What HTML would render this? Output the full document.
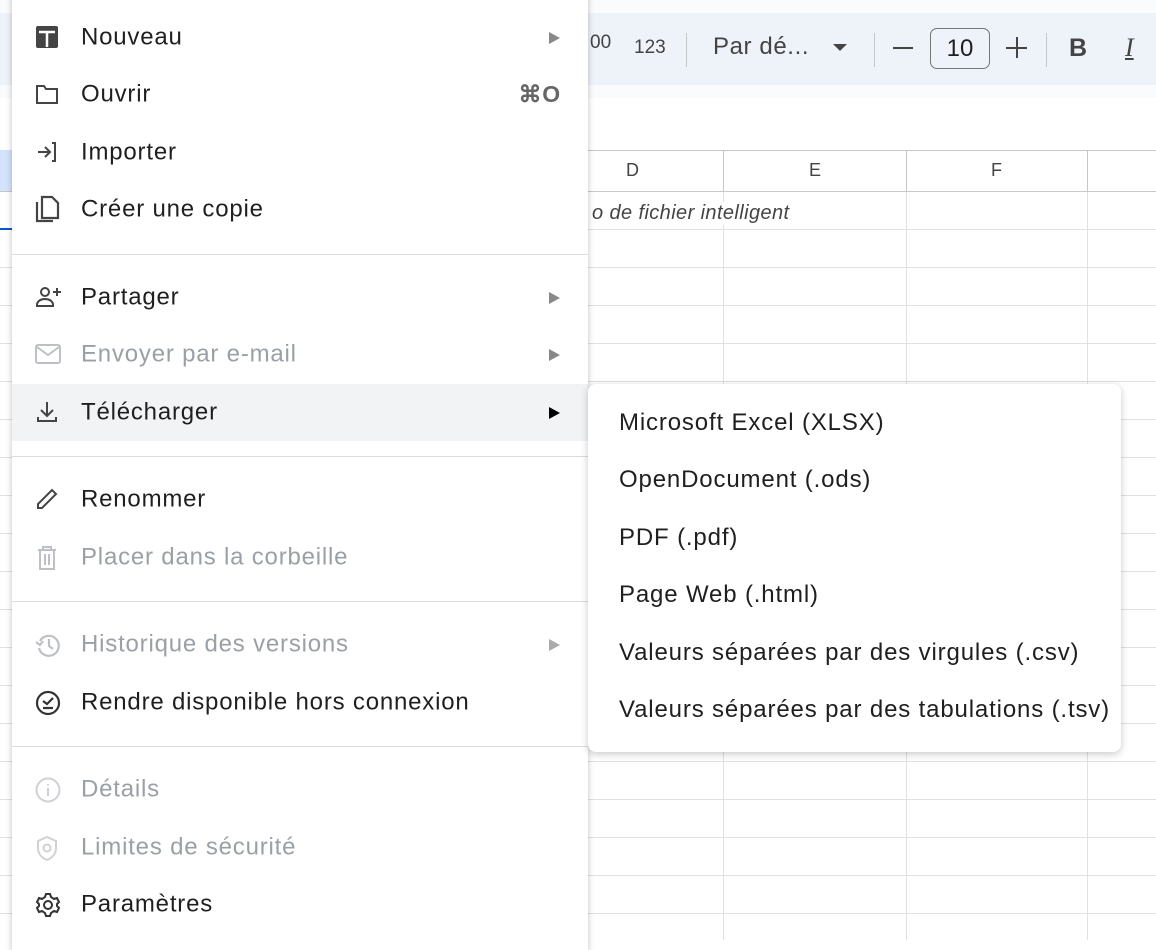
<!DOCTYPE html>
<html><head><meta charset="utf-8"><style>
*{margin:0;padding:0;box-sizing:border-box}
body{width:1156px;height:940px;overflow:hidden;position:relative;background:#fff;font-family:"Liberation Sans",Arial,sans-serif;}
.top{position:absolute;left:0;top:0;width:1156px;height:98px;background:#f9fbfd}
.tb{position:absolute;left:0;top:13px;width:1156px;height:72px;background:#eef2f9}
.grid{position:absolute;left:0;top:191px;width:1156px;height:749px;
background-image:repeating-linear-gradient(to bottom,#e1e1e1 0,#e1e1e1 1px,transparent 1px,transparent 38px);background-position:0 0}
.vl{position:absolute;width:1px;background:#e1e1e1;top:150px;height:790px}
.hdr{position:absolute;left:0;top:150px;width:1156px;height:42px;background:#fff;border-top:1px solid #c7c7c7;border-bottom:1px solid #c7c7c7}
.hl{position:absolute;top:150px;height:41px;width:1px;background:#c7c7c7}
.col{position:absolute;top:160px;font-size:18px;color:#444}
.menu{position:absolute;left:12px;top:-10px;width:576px;height:960px;background:#fff;box-shadow:0 2px 6px rgba(0,0,0,.25)}
.it{position:absolute;left:12px;width:576px;height:57px;font-size:24px;letter-spacing:0.8px;color:#1f1f1f}
.it span.t{position:absolute;left:69px;top:50%;transform:translateY(-52%);white-space:nowrap}
.it.dis{color:#9aa0a6}
.it svg{position:absolute;left:23px;top:16px}
.arr{position:absolute;right:28px;top:50%;transform:translateY(-50%);width:0;height:0;border-left:11px solid #888;border-top:6px solid transparent;border-bottom:6px solid transparent}
.sep{position:absolute;left:12px;width:576px;height:1px;background:#dadce0}
.sub{position:absolute;left:588px;top:384px;width:533px;height:368px;background:#fff;border-radius:8px;box-shadow:0 2px 8px rgba(0,0,0,.22)}
.si{position:absolute;left:31px;font-size:24px;letter-spacing:0.85px;color:#1f1f1f;white-space:nowrap}
</style></head><body>
<div class="top"></div>
<div class="tb"></div>
<div style="position:absolute;left:634px;top:37px;font-size:19px;color:#444">123</div>
<div style="position:absolute;left:686px;top:33px;width:1px;height:34px;background:#c7c7c7"></div>
<div style="position:absolute;left:713px;top:33px;font-size:24px;letter-spacing:0.6px;color:#444">Par dé...</div>
<div style="position:absolute;left:833px;top:44px;border-top:7px solid #444;border-left:7px solid transparent;border-right:7px solid transparent"></div>
<div style="position:absolute;left:874px;top:33px;width:1px;height:34px;background:#c7c7c7"></div>
<div style="position:absolute;left:893px;top:47px;width:20px;height:2px;background:#444"></div>
<div style="position:absolute;left:930px;top:28px;width:60px;height:41px;border:1px solid #747775;border-radius:7px;font-size:24px;color:#1f1f1f;text-align:center;line-height:39px">10</div>
<div style="position:absolute;left:1006px;top:47px;width:21px;height:2px;background:#444"></div>
<div style="position:absolute;left:1016px;top:37px;width:2px;height:21px;background:#444"></div>
<div style="position:absolute;left:1046px;top:33px;width:1px;height:34px;background:#c7c7c7"></div>
<div style="position:absolute;left:1069px;top:34px;font-size:25px;font-weight:bold;color:#444">B</div>
<div style="position:absolute;left:1125px;top:33px;font-size:26px;font-style:italic;font-family:'Liberation Serif',serif;color:#444;text-decoration:underline">I</div>
<div style="position:absolute;left:590px;top:32px;font-size:19px;color:#444">00</div>
<div class="grid"></div>
<div class="vl" style="left:723px"></div><div class="vl" style="left:906px"></div><div class="vl" style="left:1087px"></div>
<div class="hdr"></div>
<div style="position:absolute;left:0;top:150px;width:12px;height:41px;background:#d3e3fd"></div>
<div style="position:absolute;left:0;top:228px;width:12px;height:2px;background:#0b57d0"></div>
<div class="hl" style="left:723px"></div><div class="hl" style="left:906px"></div><div class="hl" style="left:1087px"></div>
<div class="col" style="left:626px">D</div><div class="col" style="left:809px">E</div><div class="col" style="left:991px">F</div>
<div style="position:absolute;left:592px;top:202px;font-size:20px;letter-spacing:0.4px;font-style:italic;color:#444;background:#fff">o de fichier intelligent</div>

<div class="menu"></div>
<div class="it" style="top:9px"><svg width="24" height="24" viewBox="0 0 24 24"><rect x="1" y="1" width="22" height="22" rx="2" fill="#444"/><path d="M4 7h16M12 7v15" stroke="#fff" stroke-width="2.5"/></svg><span class="t">Nouveau</span><div class="arr"></div></div>
<div class="it" style="top:66px"><svg width="24" height="24" viewBox="0 0 24 24" fill="none" stroke="#444" stroke-width="2"><path d="M2 4h7l2 3h11v14H2z"/></svg><span class="t">Ouvrir</span><span style="position:absolute;right:27px;top:50%;transform:translateY(-52%);color:#666;font-size:23px;font-weight:bold">⌘O</span></div>
<div class="it" style="top:124px"><svg width="24" height="24" viewBox="0 0 24 24" fill="none" stroke="#444" stroke-width="2"><path d="M3 12h11M10 7l5 5-5 5M17 3h3v18h-3"/></svg><span class="t">Importer</span></div>
<div class="it" style="top:181px"><svg width="26" height="28" viewBox="0 0 26 28" fill="none" stroke="#444" stroke-width="2.2" style="top:14px"><path d="M2 7v19h16M7 2h10l6 6v15H7z"/></svg><span class="t">Créer une copie</span></div>
<div class="sep" style="top:254px"></div>
<div class="it" style="top:269px"><svg width="28" height="24" viewBox="0 0 28 24" fill="none" stroke="#444" stroke-width="2"><circle cx="10" cy="7" r="4"/><path d="M2 20c0-4 4-6 8-6s8 2 8 6v1H2z"/><path d="M22 3v8M18 7h8"/></svg><span class="t">Partager</span><div class="arr"></div></div>
<div class="it dis" style="top:326px"><svg width="26" height="24" viewBox="0 0 26 24" fill="none" stroke="#bdc1c6" stroke-width="2"><rect x="1" y="3" width="24" height="18" rx="2"/><path d="M2 5l11 8 11-8"/></svg><span class="t">Envoyer par e-mail</span><div class="arr"></div></div>
<div class="it" style="top:384px;background:#f1f3f4;height:57px"><svg width="24" height="24" viewBox="0 0 24 24" fill="none" stroke="#444" stroke-width="2"><path d="M12 2v13M6 10l6 6 6-6M3 17v4h18v-4"/></svg><span class="t">Télécharger</span><div class="arr" style="border-left-color:#000"></div></div>
<div class="sep" style="top:456px"></div>
<div class="it" style="top:471px"><svg width="24" height="24" viewBox="0 0 24 24" fill="none" stroke="#444" stroke-width="2"><path d="M3 21v-4L17 3l4 4L7 21z"/></svg><span class="t">Renommer</span></div>
<div class="it dis" style="top:529px"><svg width="24" height="26" viewBox="0 0 24 26" fill="none" stroke="#bdc1c6" stroke-width="2"><path d="M3 5h18M8 5V2h8v3M5 5v19h14V5M10 9v11M14 9v11"/></svg><span class="t">Placer dans la corbeille</span></div>
<div class="sep" style="top:601px"></div>
<div class="it dis" style="top:616px"><svg width="26" height="26" viewBox="0 0 26 26" fill="none" stroke="#bdc1c6" stroke-width="2.2"><path d="M5 9a10 10 0 1 1-1 7"/><path d="M1 10l4 3 3-4"/><path d="M14 7v7l4 3"/></svg><span class="t">Historique des versions</span><div class="arr" style="border-left-color:#aaa"></div></div>
<div class="it" style="top:674px"><svg width="26" height="26" viewBox="0 0 26 26" fill="none" stroke="#333" stroke-width="2.2"><circle cx="13" cy="13" r="11"/><path d="M8 11l4 3 6-6M8 18h10"/></svg><span class="t">Rendre disponible hors connexion</span></div>
<div class="sep" style="top:746px"></div>
<div class="it dis" style="top:761px"><svg width="26" height="26" viewBox="0 0 26 26" fill="none" stroke="#cfd2d6" stroke-width="2"><circle cx="13" cy="13" r="11.5"/><path d="M13 11v8M13 7v1.5"/></svg><span class="t">Détails</span></div>
<div class="it dis" style="top:819px"><svg width="24" height="26" viewBox="0 0 24 26" fill="none" stroke="#cfd2d6" stroke-width="2"><path d="M12 2l9 4v7c0 6-4 10-9 12-5-2-9-6-9-12V6z"/><circle cx="12" cy="13" r="3.5"/><path d="M15.5 13v2.5"/></svg><span class="t">Limites de sécurité</span></div>
<div class="it" style="top:876px"><svg width="26" height="26" viewBox="0 0 26 26" fill="none" stroke="#333" stroke-width="2"><path d="M11 2h4l1 3 3 2 3-1 2 4-2 2v2l2 2-2 4-3-1-3 2-1 3h-4l-1-3-3-2-3 1-2-4 2-2v-2L2 10l2-4 3 1 3-2z"/><circle cx="13" cy="13" r="4"/></svg><span class="t">Paramètres</span></div>

<div class="sub">
<div class="si" style="top:25px">Microsoft Excel (XLSX)</div>
<div class="si" style="top:82px">OpenDocument (.ods)</div>
<div class="si" style="top:140px">PDF (.pdf)</div>
<div class="si" style="top:197px">Page Web (.html)</div>
<div class="si" style="top:255px">Valeurs séparées par des virgules (.csv)</div>
<div class="si" style="top:312px">Valeurs séparées par des tabulations (.tsv)</div>
</div>
</body></html>
